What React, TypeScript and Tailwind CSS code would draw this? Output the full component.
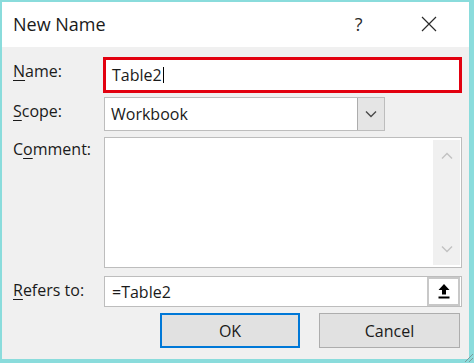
import React from 'react';

const Chevron = ({ up = false, className = '' }: { up?: boolean; className?: string }) => (
  <svg width="12" height="8" viewBox="0 0 12 8" className={className}>
    <path
      d={up ? 'M1 6.5 L6 1.5 L11 6.5' : 'M1 1.5 L6 6.5 L11 1.5'}
      fill="none"
      stroke="currentColor"
      strokeWidth="1.4"
    />
  </svg>
);

const Label = ({ first, mnemonic, rest, className = '' }: { first?: string; mnemonic: string; rest: string; className?: string }) => (
  <div className={`w-[90px] shrink-0 leading-[22px] ${className}`}>
    {first}
    <span className="underline underline-offset-[3px]">{mnemonic}</span>
    {rest}
  </div>
);

export default function App() {
  return (
    <div className="relative h-[363px] w-[474px] bg-white">
      <div className="flex h-full flex-col border-b-4 border-l-2 border-r-[5px] border-t-2 border-[#8adcdc] font-['Open_Sans',sans-serif] text-[16px] text-[#1a1a1a]">
        {/* title bar */}
        <div className="flex h-[45px] shrink-0 items-center bg-white pb-[2px] pl-[11px]">
          <span className="text-[18px] leading-[24px]">New Name</span>
          <span className="ml-[249px] text-[18px] leading-[24px] text-[#2a2a2a]">?</span>
          <svg width="16" height="16" viewBox="0 0 16 16" className="ml-[59px] text-[#2a2a2a]">
            <path d="M1 1 L15 15 M15 1 L1 15" stroke="currentColor" strokeWidth="1.2" />
          </svg>
        </div>

        {/* body */}
        <div className="flex flex-1 flex-col bg-[#f0f0f0] pl-[11px] pr-[7px] pt-[10px]">
          <div className="flex h-[36px]">
            <Label mnemonic="N" rest="ame:" className="mt-[3px]" />
            <div className="flex flex-1 items-center border-[3px] border-[#e2000f] bg-white pl-[6px]">
              <span>Table2</span>
              <span className="ml-px h-[16px] w-px bg-black" />
            </div>
          </div>

          <div className="mt-[4px] flex h-[34px]">
            <Label mnemonic="S" rest="cope:" className="mt-[3px]" />
            <div className="ml-px flex w-[281px] border border-[#bdbdbd] bg-white">
              <div className="flex flex-1 items-center pl-[6px]">Workbook</div>
              <div className="flex w-[27px] items-center justify-center border-l border-[#adadad] bg-[#e5e5e5] text-[#4a4a4a]">
                <Chevron />
              </div>
            </div>
          </div>

          <div className="mt-[6px] flex h-[131px]">
            <Label first="C" mnemonic="o" rest="mment:" className="mt-[1px]" />
            <div className="ml-px flex flex-1 border border-[#bdbdbd] bg-white">
              <div className="flex-1" />
              <div className="my-[2px] mr-px flex w-[27px] flex-col items-center justify-between bg-[#f0f0f0] py-[12px] text-[#c2c2c2]">
                <Chevron up />
                <Chevron />
              </div>
            </div>
          </div>

          <div className="mt-[8px] flex h-[31px]">
            <Label mnemonic="R" rest="efers to:" className="mt-[3px]" />
            <div className="ml-px flex flex-1 border border-[#bdbdbd] bg-white">
              <div className="flex flex-1 items-center pl-[7px]">=Table2</div>
              <div className="mr-px flex w-[33px] items-center justify-center border-2 border-[#c8c8c8] bg-white">
                <svg width="12" height="15" viewBox="0 0 12 15">
                  <path d="M6 0 L11.5 6 L8 6 L8 10.5 L4 10.5 L4 6 L0.5 6 Z" fill="#000" />
                  <rect x="0.5" y="12.5" width="11" height="2" fill="#000" />
                </svg>
              </div>
            </div>
          </div>

          <div className="mt-[6px] flex h-[35px] justify-end gap-[19px] pr-[2px]">
            <button className="flex w-[140px] items-center justify-center border-2 border-[#0078d7] bg-[#e1e1e1]">
              OK
            </button>
            <button className="flex w-[141px] items-center justify-center border border-[#adadad] bg-[#e1e1e1]">
              Cancel
            </button>
          </div>
        </div>
      </div>

      <svg width="12" height="12" viewBox="0 0 12 12" className="absolute bottom-0 right-0 text-[#7a9a9a]">
        <path d="M11 3 L3 11 M11 7 L7 11" stroke="currentColor" strokeWidth="1" />
      </svg>
    </div>
  );
}
